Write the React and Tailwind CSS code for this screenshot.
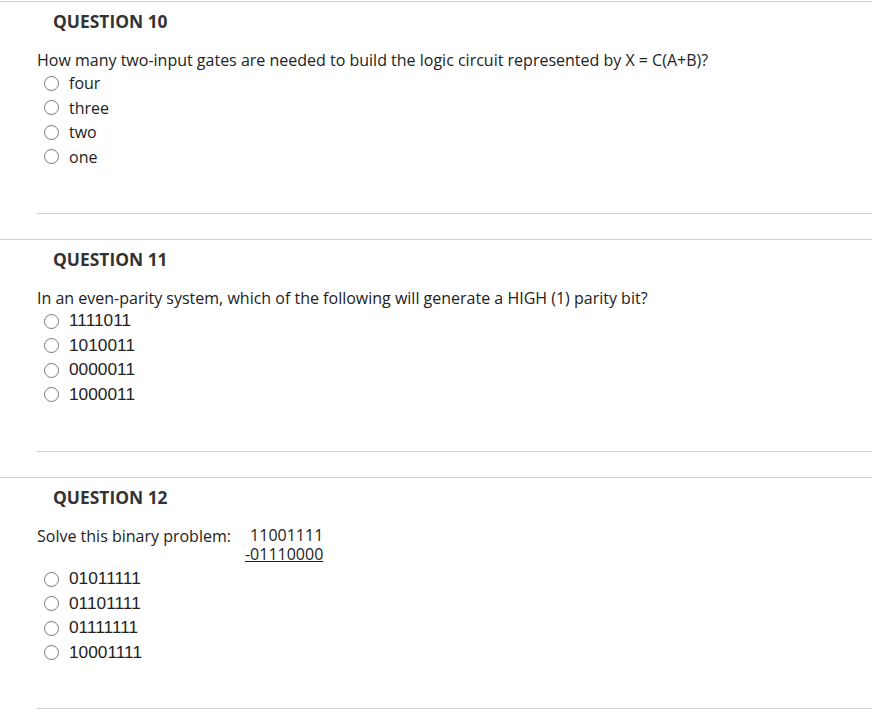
const questions = [
  {
    num: 10,
    text: "How many two-input gates are needed to build the logic circuit represented by X = C(A+B)?",
    options: ["four", "three", "two", "one"],
  },
  {
    num: 11,
    text: "In an even-parity system, which of the following will generate a HIGH (1) parity bit?",
    options: ["1111011", "1010011", "0000011", "1000011"],
    numeric: true,
  },
  {
    num: 12,
    binary: true,
    numeric: true,
    options: ["01011111", "01101111", "01111111", "10001111"],
  },
];

const Option = ({ label, numeric }) => (
  <div className="flex items-center h-[24.5px] pl-[44px]">
    <span className="w-[15px] h-[15px] rounded-full border border-[#7a7a7a] bg-white shrink-0" />
    {numeric ? (
      <span
        className="ml-[10px] text-[17.3px] text-[#222]"
        style={{ fontFamily: '"Liberation Sans", Arial, sans-serif' }}
      >
        {label}
      </span>
    ) : (
      <span className="ml-[10px] text-[16px] text-[#222]">{label}</span>
    )}
  </div>
);

const Question = ({ q }) => (
  <div className="border-t border-[#d0d0d0]">
    <div className="pl-[53px] mt-[7px] h-[24px] leading-[24px] text-[17.4px] font-bold text-[#333]">
      QUESTION {q.num}
    </div>
    <div className="pl-[37px] mt-[17px] text-[16px] text-[#222]">
      {q.binary ? (
        <div className="flex">
          <div className="leading-[20px]">Solve this binary problem:</div>
          <div className="ml-[14px] flex flex-col items-end leading-[19px]">
            <span>11001111</span>
            <span className="underline">-01110000</span>
          </div>
        </div>
      ) : (
        <div className="leading-[20px]">{q.text}</div>
      )}
    </div>
    <div className={q.binary ? "mt-[3px]" : "mt-px"}>
      {q.options.map((o) => (
        <Option key={o} label={o} numeric={q.numeric} />
      ))}
    </div>
    <div className={q.binary ? "h-[43px]" : "h-[44px]"} />
    <div className="ml-[37px] border-t border-[#d0d0d0]" />
    <div className="h-[25px]" />
  </div>
);

export default function App() {
  return (
    <div
      className="bg-white w-[872px] h-[712px] overflow-hidden pt-px"
      style={{ fontFamily: '"Open Sans", sans-serif' }}
    >
      {questions.map((q) => (
        <Question key={q.num} q={q} />
      ))}
    </div>
  );
}
